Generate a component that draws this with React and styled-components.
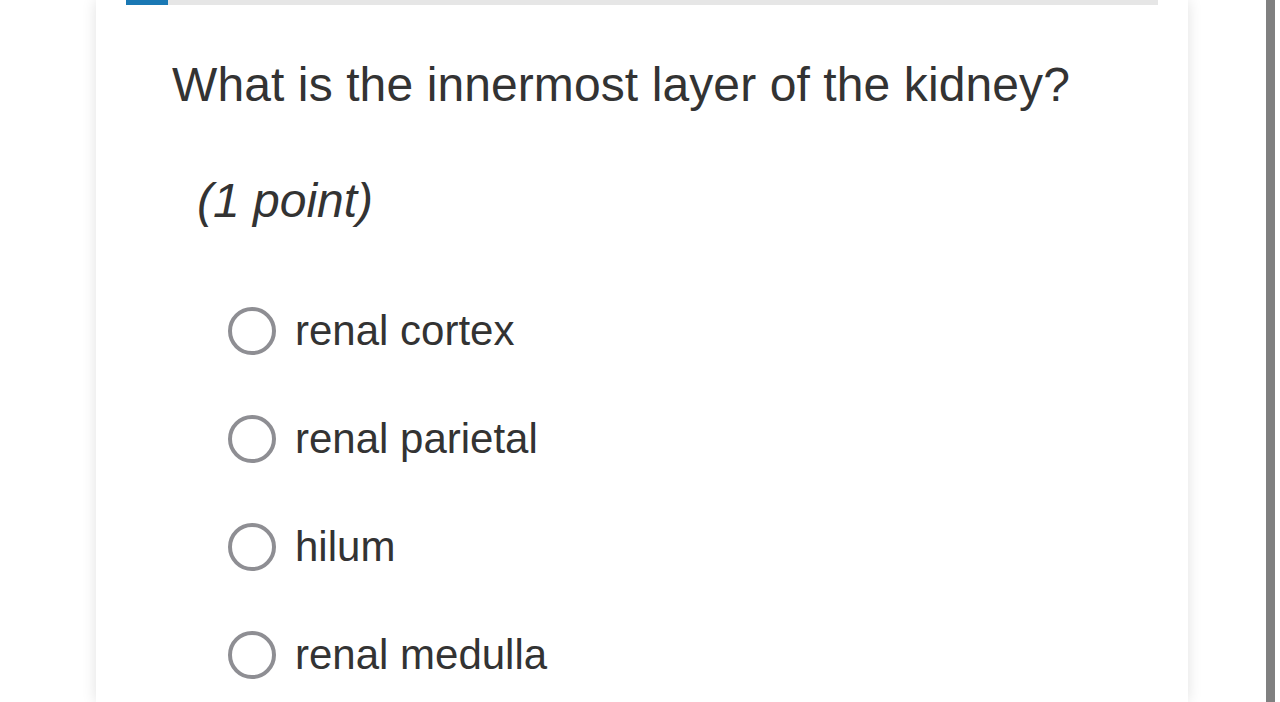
import styled, { createGlobalStyle } from "styled-components";

const GlobalStyle = createGlobalStyle`
  html, body {
    margin: 0;
    padding: 0;
    background: #ffffff;
  }
  body {
    font-family: "Liberation Sans", Arial, Helvetica, sans-serif;
    color: #333333;
  }
`;

const Page = styled.div`
  display: flex;
  height: 702px;
  overflow: hidden;
  padding-left: 96px;
  box-sizing: border-box;
`;

const Card = styled.div`
  width: 1092px;
  flex-shrink: 0;
  background: #ffffff;
  box-shadow: 0 0 14px rgba(0, 0, 0, 0.12);
  padding: 0 30px;
  box-sizing: border-box;
`;

const Progress = styled.div`
  height: 5px;
  background: #e6e6e6;
  display: flex;
`;

const ProgressFill = styled.div`
  width: ${(p) => p.$width}px;
  background: #1a78b4;
`;

const Question = styled.h1`
  margin: 52px 0 0 46px;
  font-size: 48px;
  line-height: 56px;
  font-weight: 400;
  letter-spacing: 0.1px;
  color: #333333;
`;

const Points = styled.div`
  margin: 60px 0 0 71px;
  font-size: 48px;
  line-height: 56px;
  font-style: italic;
  color: #333333;
`;

const Options = styled.div`
  margin: 48px 0 0 102px;
  display: flex;
  flex-direction: column;
`;

const Option = styled.label`
  display: flex;
  align-items: center;
  height: 108px;
  gap: 19px;
  font-size: 42px;
  line-height: 48px;
  color: #333333;
`;

const Radio = styled.span`
  width: 48px;
  height: 48px;
  border: 4px solid #8e8e93;
  border-radius: 50%;
  box-sizing: border-box;
  flex-shrink: 0;
`;

const ScrollThumb = styled.div`
  margin-left: auto;
  margin-right: 5px;
  width: 9px;
  background: #808080;
`;

const answers = ["renal cortex", "renal parietal", "hilum", "renal medulla"];

export default function App() {
  return (
    <>
      <GlobalStyle />
      <Page>
        <Card>
          <Progress>
            <ProgressFill $width={42} />
          </Progress>
          <Question>What is the innermost layer of the kidney?</Question>
          <Points>(1 point)</Points>
          <Options>
            {answers.map((a) => (
              <Option key={a}>
                <Radio />
                {a}
              </Option>
            ))}
          </Options>
        </Card>
        <ScrollThumb />
      </Page>
    </>
  );
}
